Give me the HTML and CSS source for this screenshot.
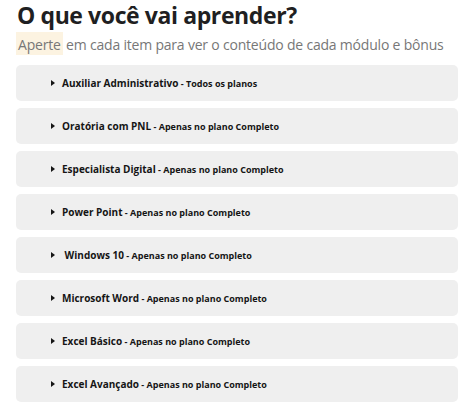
FILE: index.html
```html
<!DOCTYPE html>
<html lang="pt">
<head>
<meta charset="utf-8">
<link rel="stylesheet" href="styles.css">
</head>
<body>
<main class="page">
  <h1 class="title">O que você vai aprender?</h1>
  <p class="subtitle"><span class="hl">Aperte</span> em cada item para ver o conteúdo de cada módulo e bônus</p>
  <ul class="list">
    <li class="item"><span class="arrow"></span><b class="name">Auxiliar Administrativo</b><span class="tag">&nbsp;- Todos os planos</span></li>
    <li class="item"><span class="arrow"></span><b class="name">Oratória com PNL</b><span class="tag">&nbsp;- Apenas no plano Completo</span></li>
    <li class="item"><span class="arrow"></span><b class="name">Especialista Digital</b><span class="tag">&nbsp;- Apenas no plano Completo</span></li>
    <li class="item"><span class="arrow"></span><b class="name">Power Point</b><span class="tag">&nbsp;- Apenas no plano Completo</span></li>
    <li class="item"><span class="arrow"></span><b class="name">&nbsp;Windows 10</b><span class="tag">&nbsp;- Apenas no plano Completo</span></li>
    <li class="item"><span class="arrow"></span><b class="name">Microsoft Word</b><span class="tag">&nbsp;- Apenas no plano Completo</span></li>
    <li class="item"><span class="arrow"></span><b class="name">Excel Básico</b><span class="tag">&nbsp;- Apenas no plano Completo</span></li>
    <li class="item"><span class="arrow"></span><b class="name">Excel Avançado</b><span class="tag">&nbsp;- Apenas no plano Completo</span></li>
  </ul>
</main>
</body>
</html>
```
FILE: styles.css
```css
html, body {
  margin: 0;
  padding: 0;
  background: #ffffff;
}
body {
  font-family: "Open Sans", "Noto Sans", sans-serif;
}
.page {
  padding: 0 16px;
}
.title {
  margin: 0;
  padding: 0 0 0 1px;
  font-size: 23px;
  line-height: 31px;
  letter-spacing: -0.4px;
  font-weight: 700;
  color: #1f1f22;
}
.subtitle {
  margin: 1px 0 0;
  font-size: 14px;
  line-height: 25px;
  letter-spacing: -0.2px;
  color: #777777;
  white-space: nowrap;
}
.hl {
  background: #fcf3e1;
  padding: 3px 2px 1px;
}
.list {
  list-style: none;
  margin: 8px 0 0;
  padding: 0;
  display: flex;
  flex-direction: column;
  gap: 7px;
}
.item {
  height: 36px;
  background: #efefef;
  border-radius: 5px;
  display: flex;
  align-items: center;
  padding-left: 35px;
  color: #151515;
}
.arrow {
  width: 0;
  height: 0;
  border-top: 3px solid transparent;
  border-bottom: 3px solid transparent;
  border-left: 4px solid #151515;
  margin-right: 7px;
}
.name {
  font-size: 10px;
  font-weight: 700;
}
.tag {
  font-size: 9px;
  font-weight: 700;
}
```
